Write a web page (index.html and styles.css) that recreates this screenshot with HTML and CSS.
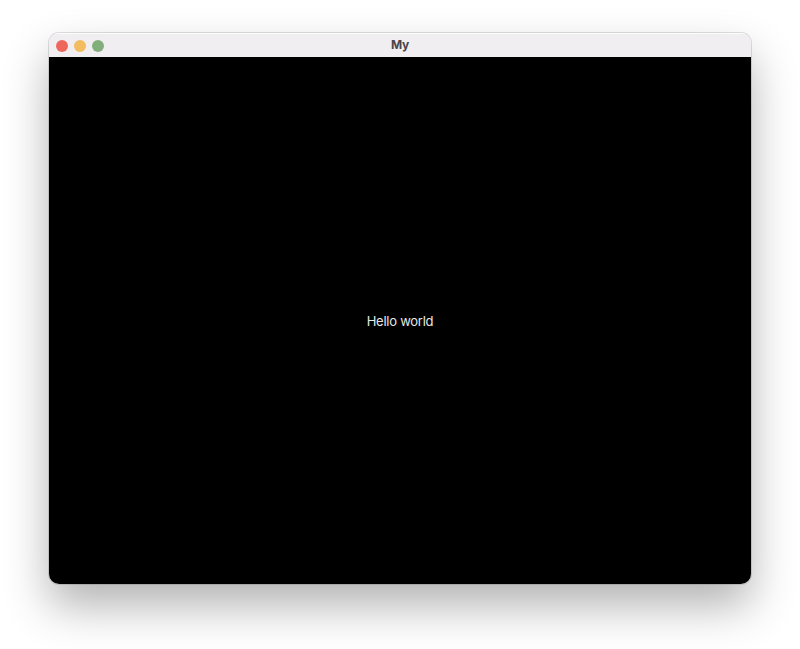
FILE: index.html
```html
<!DOCTYPE html>
<html>
<head>
<meta charset="utf-8">
<link rel="stylesheet" href="styles.css">
</head>
<body>
<div class="stage">
  <div class="window">
    <div class="titlebar">
      <div class="lights">
        <span class="light red"></span>
        <span class="light yellow"></span>
        <span class="light green"></span>
      </div>
      <div class="title">My</div>
    </div>
    <div class="content">
      <span class="hello">Hello world</span>
    </div>
  </div>
</div>
</body>
</html>
```
FILE: styles.css
```css
html, body {
  margin: 0;
  padding: 0;
  background: #ffffff;
  font-family: "Inter", "Liberation Sans", sans-serif;
}
.stage {
  width: 800px;
  height: 649px;
  padding: 33px 0 0 49px;
  box-sizing: border-box;
}
.window {
  width: 702px;
  height: 551px;
  border-radius: 10px;
  overflow: hidden;
  display: flex;
  flex-direction: column;
  box-shadow: 0 22px 45px rgba(0, 0, 0, 0.30), 0 0 0 1px rgba(0, 0, 0, 0.12);
}
.titlebar {
  height: 24px;
  flex: none;
  background: #f0eef1;
  display: flex;
  align-items: center;
  position: relative;
  box-shadow: inset 0 1px 0 rgba(255,255,255,0.8);
}
.lights {
  display: flex;
  gap: 6px;
  padding-left: 7px;
  padding-top: 1px;
}
.light {
  width: 12px;
  height: 12px;
  border-radius: 50%;
  display: block;
}
.red { background: #ee675c; }
.yellow { background: #f3bc5e; }
.green { background: #82ae7b; }
.title {
  position: absolute;
  left: 0;
  right: 0;
  top: 0;
  line-height: 24px;
  text-align: center;
  font-size: 12px;
  font-weight: 700;
  color: #4a4548;
  letter-spacing: -0.2px;
  pointer-events: none;
}
.content {
  flex: 1;
  background: #000000;
  display: flex;
  align-items: center;
  justify-content: center;
}
.hello {
  color: #e8e8e8;
  font-size: 13px;
  letter-spacing: -0.25px;
}
```
